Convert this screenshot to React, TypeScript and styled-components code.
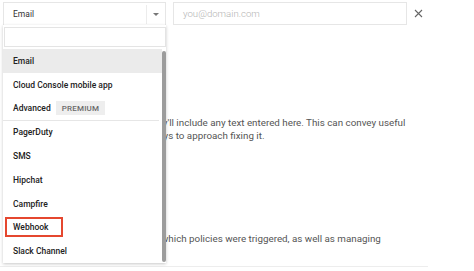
import styled, { createGlobalStyle } from 'styled-components';

const GlobalStyle = createGlobalStyle`
    html, body {
        margin: 0;
        padding: 0;
        background: #ffffff;
        font-family: Roboto, "Liberation Sans", sans-serif;
    }
`;

const Page = styled.div`
    position: relative;
    width: 474px;
    height: 271px;
    overflow: hidden;
    background: #ffffff;
`;

const TopRow = styled.div`
    display: flex;
    align-items: center;
    padding: 2px 0 0 3px;
    height: 23px;
`;

const Select = styled.div`
    display: flex;
    align-items: center;
    width: 163px;
    height: 23px;
    box-sizing: border-box;
    border: 1px solid #e6e6e6;
    border-bottom: none;
`;

const SelectValue = styled.div`
    flex: 1;
    padding-left: 9px;
    font-size: 8.5px;
    color: #333333;
`;

const SelectArrow = styled.div`
    width: 18px;
    height: 19px;
    border-left: 1px solid #ececec;
    display: flex;
    align-items: center;
    justify-content: center;
`;

const Caret = styled.div`
    width: 0;
    height: 0;
    border-left: 3px solid transparent;
    border-right: 3px solid transparent;
    border-top: 3px solid #777777;
`;

const EmailInput = styled.div`
    margin-left: 7px;
    width: 234px;
    height: 23px;
    box-sizing: border-box;
    border: 1px solid #e6e6e6;
    display: flex;
    align-items: center;
    padding-left: 9px;
    font-size: 9.6px;
    color: #b3b3b3;
    font-weight: 300;
`;

const Close = styled.div`
    margin-left: 7px;
    display: flex;
    align-items: center;
`;

const Body = styled.div`
    padding-top: 91px;
    font-size: 9.8px;
    line-height: 13px;
    color: #555555;
`;

const Line = styled.div<{ $x: number; $gap?: number }>`
    white-space: nowrap;
    margin-left: ${p => p.$x}px;
    margin-top: ${p => p.$gap ?? 0}px;
`;

const Rule = styled.div`
    margin-top: 21px;
    width: 428px;
    height: 1px;
    background: #ededed;
`;

const Dropdown = styled.div`
    position: absolute;
    left: 3px;
    top: 25px;
    width: 163px;
    height: 238px;
    background: #ffffff;
    box-shadow: 0 1px 3px rgba(0, 0, 0, 0.22);
    display: flex;
    flex-direction: column;
`;

const Search = styled.div`
    margin: 2px 0 0 1px;
    height: 21px;
    box-sizing: border-box;
    border: 1px solid #e4e4e4;
`;

const ListWrap = styled.div`
    flex: 1;
    display: flex;
    margin-top: 2px;
`;

const List = styled.div`
    flex: 1;
    display: flex;
    flex-direction: column;
`;

const Item = styled.div<{ $active?: boolean; $divider?: boolean }>`
    height: 23.75px;
    box-sizing: border-box;
    display: flex;
    align-items: center;
    gap: 5px;
    padding-left: 10px;
    font-size: 8.5px;
    font-weight: 500;
    color: #222222;
    background: ${p => (p.$active ? '#ebebeb' : 'transparent')};
    border-bottom: ${p => (p.$divider ? '1px solid #e6e6e6' : 'none')};
    margin-right: ${p => (p.$divider ? '3px' : '0')};
`;

const Badge = styled.span`
    display: inline-flex;
    align-items: center;
    height: 14px;
    padding: 0 6px;
    background: #eeeeee;
    color: #6a6a6a;
    font-size: 8px;
    font-weight: 500;
    letter-spacing: 0.2px;
`;

const Highlight = styled.span`
    margin-left: -8px;
    padding: 3px 12px 3px 6px;
    border: 2px solid #e5472f;
`;

const Track = styled.div`
    width: 4px;
    padding: 2px 0 1px;
    display: flex;
`;

const Thumb = styled.div`
    flex: 1;
    width: 3px;
    border-radius: 2px;
    background: #9c9c9c;
`;

const items = [
    'PagerDuty',
    'SMS',
    'Hipchat',
    'Campfire',
];

export default function App() {
    return (
        <Page>
            <GlobalStyle />
            <TopRow>
                <Select>
                    <SelectValue>Email</SelectValue>
                    <SelectArrow>
                        <Caret />
                    </SelectArrow>
                </Select>
                <EmailInput>you@domain.com</EmailInput>
                <Close>
                    <svg width="9" height="9" viewBox="0 0 9 9">
                        <path d="M1 1L8 8M8 1L1 8" stroke="#666" strokeWidth="1.1" />
                    </svg>
                </Close>
            </TopRow>
            <Body>
                <Line $x={149}>they'll include any text entered here. This can convey useful</Line>
                <Line $x={151}>ways to approach fixing it.</Line>
                <Line $x={161} $gap={90}>which policies were triggered, as well as managing</Line>
                <Rule />
            </Body>
            <Dropdown>
                <Search />
                <ListWrap>
                    <List>
                        <Item $active>Email</Item>
                        <Item>Cloud Console mobile app</Item>
                        <Item $divider>
                            Advanced <Badge>PREMIUM</Badge>
                        </Item>
                        {items.map(label => (
                            <Item key={label}>{label}</Item>
                        ))}
                        <Item>
                            <Highlight>Webhook</Highlight>
                        </Item>
                        <Item>Slack Channel</Item>
                    </List>
                    <Track>
                        <Thumb />
                    </Track>
                </ListWrap>
            </Dropdown>
        </Page>
    );
}
